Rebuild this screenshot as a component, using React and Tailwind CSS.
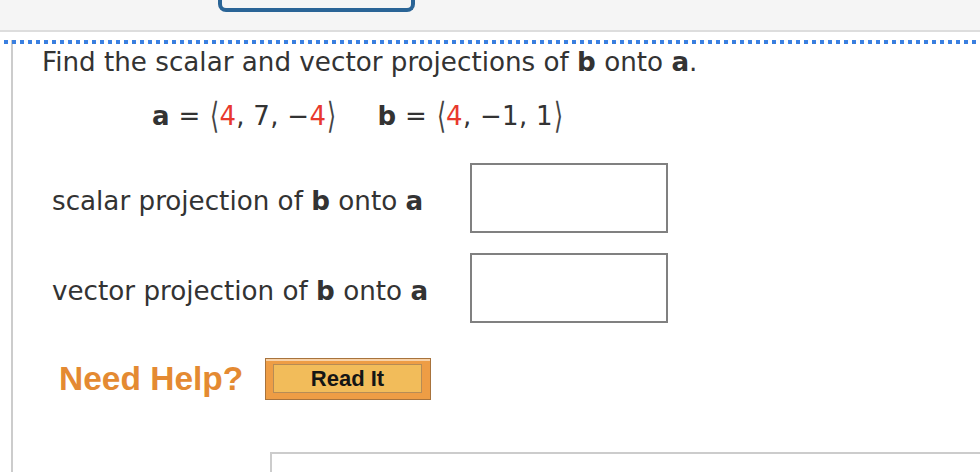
import React from 'react'

function Red({ children }) {
  return <span className="text-[#e8392e]">{children}</span>
}

function Br({ children }) {
  return <span className="inline-block scale-y-[1.4] scale-x-[0.9] font-light text-[#444]">{children}</span>
}

function AnswerRow({ label, first }) {
  return (
    <div className={`flex items-center ${first ? 'mt-[31px]' : 'mt-[20px]'}`}>
      <div className="w-[428px] pl-[10px] pt-[6px] text-[26.2px] leading-[31px] whitespace-nowrap">
        {label}
      </div>
      <div className="w-[198px] h-[70px] border-2 border-[#808080] bg-white"></div>
    </div>
  )
}

export default function App() {
  return (
    <div className="w-full h-[472px] overflow-hidden bg-white text-[#333] font-['DejaVu_Sans',sans-serif]">

      {/* TOP BAR */}

      <div className="h-[32px] bg-[#f5f5f5] border-b-2 border-[#dddddd]">
        <div className="ml-[218px] w-[197px] h-[12px] border-4 border-t-0 border-[#2a6496] rounded-b-[8px]"></div>
      </div>

      {/* QUESTION */}

      <div className="ml-[11px] h-[440px] border-l-2 border-[#cccccc]">

        <div className="mt-[8px] -ml-[13px] w-[calc(100%+13px)] h-[4px] bg-[repeating-linear-gradient(to_right,transparent_0px,transparent_4px,#3b80e0_4px,#3b80e0_8px)]"></div>

        <div className="pl-[29px]">

          <p className="mt-[3px] text-[26.2px] leading-[31px] whitespace-nowrap">
            Find the scalar and vector projections of <b>b</b> onto <b>a</b>.
          </p>

          <p className="mt-[23px] pl-[110px] text-[26px] leading-[31px] tracking-[0.3px] whitespace-nowrap">
            <b>a</b> = <Br>⟨</Br><Red>4</Red>, 7, −<Red>4</Red><Br>⟩</Br>
            <span className="ml-[41px]">
              <b>b</b> = <Br>⟨</Br><Red>4</Red>, −1, 1<Br>⟩</Br>
            </span>
          </p>

          <AnswerRow
            first
            label={<>scalar projection of <b>b</b> onto <b>a</b></>}
          />

          <AnswerRow
            label={<>vector projection of <b>b</b> onto <b>a</b></>}
          />

          {/* AYUDA */}

          <div className="mt-[35px] flex items-center">
            <div className="w-[223px] pl-[17px] font-['Liberation_Sans',Arial,sans-serif] font-bold text-[33.5px] leading-none text-[#e48a32]">
              Need Help?
            </div>
            <button className="w-[166px] h-[42px] border border-[#a8733c] bg-[#ee9d45] shadow-[inset_0_2px_0_#f8d2a8] pt-[5px] pb-[6px] pl-[7px] pr-[8px]">
              <div className="h-full border border-[#b78c55] bg-[#f2bc5a] flex items-center justify-center font-['Liberation_Sans',Arial,sans-serif] font-bold text-[22px] text-[#151515]">
                Read It
              </div>
            </button>
          </div>

          <div className="mt-[52px] ml-[228px] h-[40px] border-l-2 border-t-2 border-[#cccccc]"></div>

        </div>
      </div>
    </div>
  )
}
